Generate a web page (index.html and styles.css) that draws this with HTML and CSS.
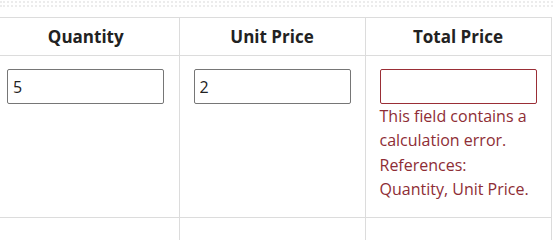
FILE: index.html
```html
<!DOCTYPE html>
<html>
<head>
<meta charset="utf-8">
<link rel="stylesheet" href="styles.css">
</head>
<body>
<div class="dots"></div>
<table class="grid">
  <thead>
    <tr>
      <th>Quantity</th>
      <th>Unit Price</th>
      <th>Total Price</th>
    </tr>
  </thead>
  <tbody>
    <tr>
      <td><input class="field" type="text" value="5"></td>
      <td><input class="field" type="text" value="2"></td>
      <td>
        <input class="field field-error" type="text" value="">
        <div class="error">This field contains a calculation error. References: Quantity, Unit Price.</div>
      </td>
    </tr>
    <tr class="next">
      <td></td><td></td><td></td>
    </tr>
  </tbody>
</table>
</body>
</html>
```

FILE: styles.css
```css
html, body {
  margin: 0;
  padding: 0;
  background: #fff;
  font-family: "Open Sans", "Noto Sans", sans-serif;
  overflow: hidden;
}
.dots {
  height: 2px;
  margin: 1px 1px 0 0;
  border-top: 2px dotted #ececec;
  border-bottom: 2px dotted #ececec;
}
.grid {
  margin-top: 10px;
  margin-left: -7px;
  border-collapse: collapse;
  table-layout: fixed;
  width: 558px;
}
.grid th, .grid td {
  border: 1px solid #dcdcdc;
  width: 186px;
  box-sizing: border-box;
}
.grid th:first-child, .grid td:first-child {
  border-left: none;
}
.grid th {
  height: 38px;
  padding: 0;
  font-size: 17px;
  font-weight: 700;
  color: #222;
  text-align: center;
}
.grid td {
  vertical-align: top;
  padding: 13px 14px 16px 14px;
}
.field {
  display: block;
  box-sizing: border-box;
  width: 157px;
  height: 35px;
  margin: 0;
  padding: 0 5px;
  border: 1px solid #767676;
  border-radius: 2px;
  font-family: "Open Sans", "Noto Sans", sans-serif;
  font-size: 16px;
  color: #222;
  background: #fff;
}
.grid td .field-error {
  border: 1px solid #9a2e36;
}
.error {
  color: #8e2d35;
  font-size: 16px;
  line-height: 24.3px;
  padding-right: 4px;
}
.next td {
  height: 30px;
  padding: 0;
}
```
